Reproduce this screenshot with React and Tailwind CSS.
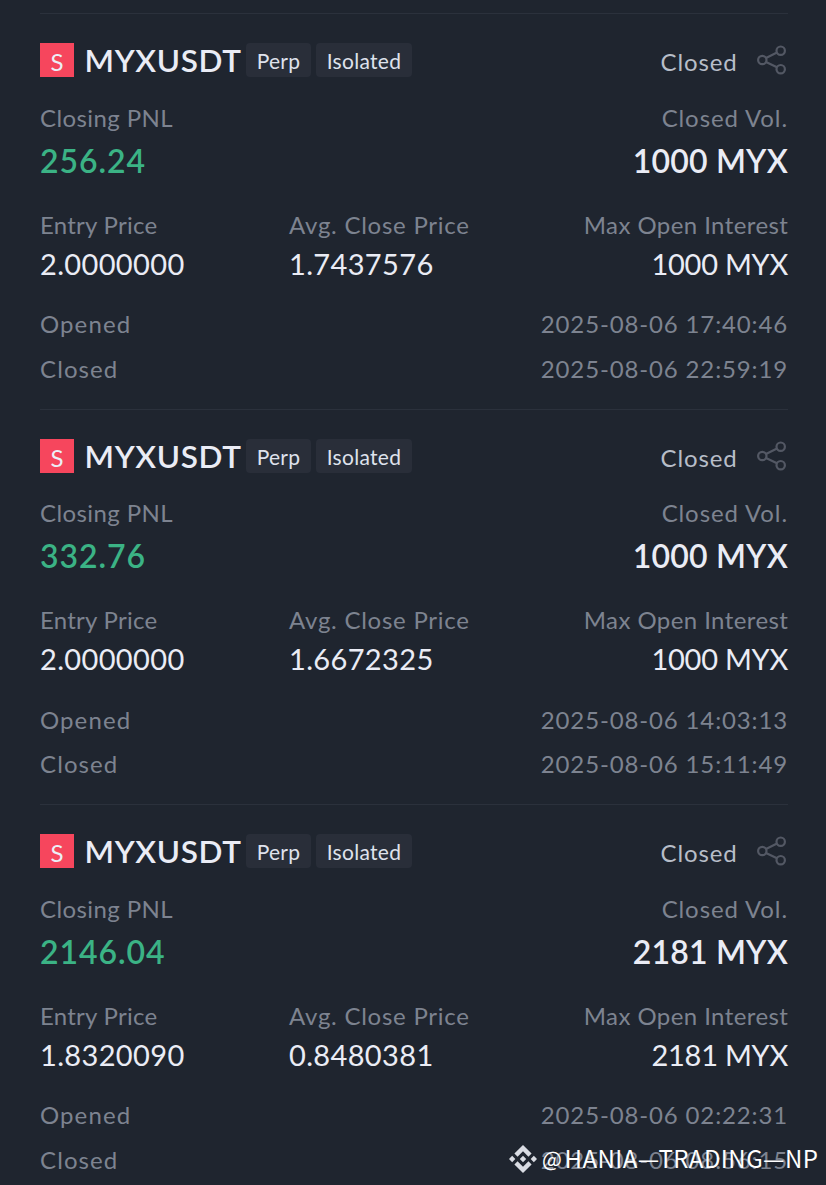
const positions = [
  { pnl: '256.24', volume: '1000 MYX', entry: '2.0000000', close: '1.7437576', opened: '2025-08-06 17:40:46', closed: '2025-08-06 22:59:19' },
  { pnl: '332.76', volume: '1000 MYX', entry: '2.0000000', close: '1.6672325', opened: '2025-08-06 14:03:13', closed: '2025-08-06 15:11:49' },
  { pnl: '2146.04', volume: '2181 MYX', entry: '1.8320090', close: '0.8480381', opened: '2025-08-06 02:22:31', closed: '2025-08-06 08:56:15' },
]

function ShareIcon() {
  return (
    <svg className="w-[30px] h-[30px] text-[#535864]" viewBox="0 0 30 30" fill="none" stroke="currentColor" strokeWidth="2.2">
      <circle cx="5.3" cy="15" r="4.2" />
      <circle cx="23.7" cy="5.7" r="4.2" />
      <circle cx="23.7" cy="24.2" r="4.2" />
      <path d="M9 13.1l11-5.5M9 16.9l11 5.4" />
    </svg>
  )
}

function Tag({ className, children }) {
  return (
    <span className={`h-[34px] rounded-[4px] bg-[#292e39] text-[#dfe2ec] text-[21px] leading-[35px] text-center ${className}`}>
      {children}
    </span>
  )
}

function Timestamp({ label, value, className }) {
  return (
    <div className={`flex justify-between text-[24px] leading-[32px] text-[#7d8390] ${className}`}>
      <span className="tracking-[1.1px]">{label}</span>
      <span className="tracking-[0.86px]">{value}</span>
    </div>
  )
}

function PositionCard({ position }) {
  return (
    <section className="h-[395.5px] border-t border-[#2b313c] whitespace-nowrap">
      {/* Symbol, tags and status */}
      <div className="mt-[29.4px] h-[34px] flex items-center">
        <span className="w-[34px] h-[34px] bg-[#f6465d] text-[#eceff7] text-[24px] leading-[38px] text-center">S</span>
        <h2 className="ml-[10.5px] w-[161.5px] text-[31.5px] leading-[34px] font-semibold text-[#eaecf5] tracking-[0.65px]">MYXUSDT</h2>
        <Tag className="w-[65px] tracking-[0.2px]">Perp</Tag>
        <Tag className="ml-[5px] w-[96px] tracking-[0.3px]">Isolated</Tag>
        <span className="ml-auto mr-[19px] mt-[4px] text-[24px] leading-[32px] text-[#b7bdc8] tracking-[0.85px]">Closed</span>
        <ShareIcon />
        <span className="w-[1.5px]" />
      </div>

      <div className="mt-[24.6px] flex justify-between text-[24px] leading-[32px] text-[#7d8390]">
        <span className="tracking-[0.4px]">Closing PNL</span>
        <span className="tracking-[0.9px]">Closed Vol.</span>
      </div>
      <div className="mt-[7px] flex justify-between text-[32px] leading-[40px] font-semibold">
        <span className="text-[#3bb385] tracking-[0.95px]">{position.pnl}</span>
        <span className="text-[#eaecf5] tracking-[0.2px]">{position.volume}</span>
      </div>

      {/* Prices */}
      <div className="mt-[27.8px] grid grid-cols-[249px_1fr_auto] text-[24px] leading-[32px] text-[#7d8390]">
        <span className="tracking-[0.25px]">Entry Price</span>
        <span className="tracking-[0.75px]">Avg. Close Price</span>
        <span className="mr-[-0.4px] tracking-[0.42px]">Max Open Interest</span>
      </div>
      <div className="mt-[5px] grid grid-cols-[249px_1fr_auto] text-[29px] leading-[36px] text-[#eaecf5]">
        <span className="tracking-[0.35px]">{position.entry}</span>
        <span className="tracking-[0.35px]">{position.close}</span>
        <span className="tracking-[-0.25px]">{position.volume}</span>
      </div>

      {/* Timestamps */}
      <Timestamp className="mt-[26.4px]" label="Opened" value={position.opened} />
      <Timestamp className="mt-[12.5px]" label="Closed" value={position.closed} />
    </section>
  )
}

function Watermark() {
  return (
    <div className="absolute left-[509px] top-[1141px] flex items-center whitespace-nowrap text-white text-[24px] leading-[34px] font-['Noto_Sans_CJK_SC',sans-serif]">
      <svg className="mt-[2px] w-[28px] h-[28px] text-[#d9dce3]" viewBox="0 0 126.61 126.61" fill="currentColor">
        <path d="M38.73 53.2L63.31 28.63l24.59 24.59 14.3-14.3L63.31 0 24.43 38.9zM0 63.31l14.3-14.31 14.31 14.31-14.31 14.3zM38.73 73.41l24.58 24.59 24.59-24.6 14.31 14.29-38.9 38.92L24.43 87.73zM98 63.31L112.3 49l14.31 14.3-14.31 14.32zM77.83 63.3L63.31 48.78 48.8 63.31 63.31 77.81z" />
      </svg>
      <span className="ml-[5px] w-[22.5px] text-[21px]">@</span>
      <span className="tracking-[0.45px]">HANIA—TRADING—NP</span>
    </div>
  )
}

export default function App() {
  return (
    <div className="relative w-[826px] h-[1185px] overflow-hidden bg-[#1f252f] px-[40px] pr-[38px] pt-[13px] font-[Lato,sans-serif]">
      {positions.map((position) => (
        <PositionCard key={position.opened} position={position} />
      ))}
      <Watermark />
    </div>
  )
}
